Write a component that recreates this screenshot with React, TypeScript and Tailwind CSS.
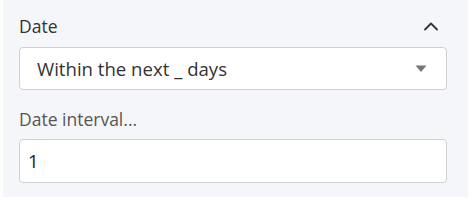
export default function App() {
  return (
    <div className="w-[474px] h-[200px] bg-white" style={{ fontFamily: "'Open Sans', 'Noto Sans', sans-serif" }}>
      <div className="ml-[3px] w-[465px] h-[197px] bg-[#f5f6f9] pl-4 pt-[14px]">
        <div className="w-[428px]">
          <div className="flex items-center justify-between h-[24px]">
            <span className="text-[17.5px] text-[#333]">Date</span>
            <svg width="16" height="10" viewBox="0 0 16 10" fill="none" className="mr-[8px]">
              <path d="M2 8.5 L8 2.5 L14 8.5" stroke="#333" strokeWidth="1.8" strokeLinecap="round" strokeLinejoin="round" />
            </svg>
          </div>
          <div className="mt-[9px] h-[43px] flex items-center justify-between rounded-[4px] border border-[#cfd0d4] bg-white pl-[17px] pr-[19px]">
            <span className="text-[18.6px] text-[#333]">Within the next _ days</span>
            <svg width="12" height="8" viewBox="0 0 12 8">
              <path d="M0.5 0.5 L11.5 0.5 L6 7 Z" fill="#777" />
            </svg>
          </div>
          <div className="mt-[16px] h-[26px] flex items-center text-[17.5px] text-[#555]">Date interval...</div>
          <div className="mt-[7px] h-[44px] flex items-center rounded-[4px] border border-[#cfd0d4] bg-white pl-[8px]">
            <span className="text-[18.6px] text-[#222]">1</span>
          </div>
        </div>
      </div>
    </div>
  );
}
